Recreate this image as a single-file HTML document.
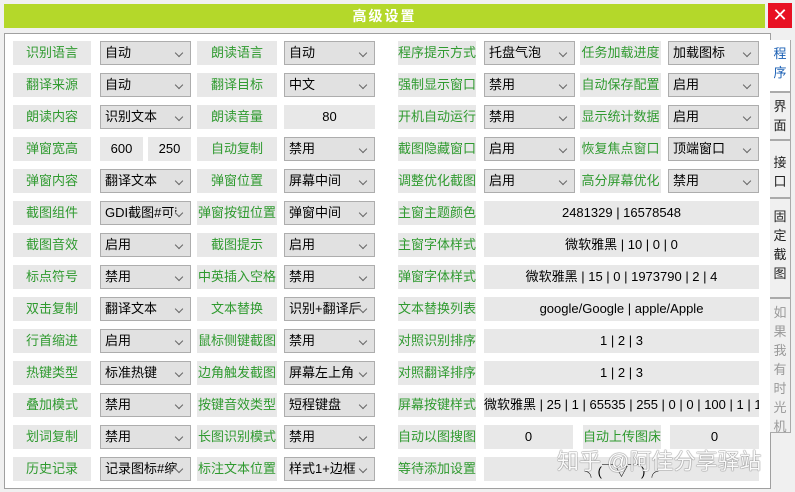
<!DOCTYPE html>
<html><head><meta charset="utf-8"><style>
*{margin:0;padding:0;box-sizing:border-box}
body{width:795px;height:492px;background:#f0f0f0;position:relative;overflow:hidden;font-family:"Liberation Sans","Noto Sans CJK SC",sans-serif;font-size:13px}
.t{position:absolute;left:4px;top:4px;width:761px;height:24px;background:#b4d82a;color:#fff;font-size:14px;font-weight:bold;text-align:center;line-height:24px;letter-spacing:2px}
.x{position:absolute;left:768px;top:3px;width:24px;height:25px;background:#e81123;color:#fff;font-size:18px;text-align:center;line-height:24px}
.p{position:absolute;left:4px;top:33px;width:767px;height:456px;border:1px solid #a0a0a0;background:#fff}
.l,.s,.v{position:absolute;height:24px;line-height:24px;white-space:nowrap;overflow:hidden}
.l{background:#e8e8e8;color:#2f9a2f;text-align:center}
.v{background:#e8e8e8;color:#000;text-align:center}
.s{background:#e1e1e1;border:1px solid #adadad;color:#000;padding-left:4px;line-height:22px}
.s::after{content:"";position:absolute;right:8px;top:8px;width:5px;height:5px;border-right:1px solid #666;border-bottom:1px solid #666;transform:rotate(45deg);background:#e1e1e1;box-shadow:3px 3px 0 3px #e1e1e1}
.tab{position:absolute;left:770px;width:21px;border:1px solid #aaa;border-left:none;background:#f0f0f0;color:#222;text-align:center;font-size:13px;line-height:19px;padding-top:4px}
</style></head><body>
<div class="t">高级设置</div><div class="x">✕</div>
<div class="p"></div>
<div class="tab" style="top:40px;height:52px;background:#fff;color:#1a5fb4;border-top:none">程<br>序</div>
<div class="tab" style="top:92px;height:48px">界<br>面</div>
<div class="tab" style="top:140px;height:58px;padding-top:12px">接<br>口</div>
<div class="tab" style="top:198px;height:100px;padding-top:8px">固<br>定<br>截<br>图</div>
<div class="tab" style="top:298px;height:135px;color:#999">如<br>果<br>我<br>有<br>时<br>光<br>机</div>

<!-- row 1 -->
<div class="l" style="left:13px;top:41px;width:78px">识别语言</div><div class="s" style="left:100px;top:41px;width:91px">自动</div>
<div class="l" style="left:197px;top:41px;width:80px">朗读语言</div><div class="s" style="left:284px;top:41px;width:91px">自动</div>
<div class="l" style="left:398px;top:41px;width:78px">程序提示方式</div><div class="s" style="left:484px;top:41px;width:91px">托盘气泡</div>
<div class="l" style="left:580px;top:41px;width:81px">任务加载进度</div><div class="s" style="left:668px;top:41px;width:91px">加载图标</div>
<!-- row 2 -->
<div class="l" style="left:13px;top:73px;width:78px">翻译来源</div><div class="s" style="left:100px;top:73px;width:91px">自动</div>
<div class="l" style="left:197px;top:73px;width:80px">翻译目标</div><div class="s" style="left:284px;top:73px;width:91px">中文</div>
<div class="l" style="left:398px;top:73px;width:78px">强制显示窗口</div><div class="s" style="left:484px;top:73px;width:91px">禁用</div>
<div class="l" style="left:580px;top:73px;width:81px">自动保存配置</div><div class="s" style="left:668px;top:73px;width:91px">启用</div>
<!-- row 3 -->
<div class="l" style="left:13px;top:105px;width:78px">朗读内容</div><div class="s" style="left:100px;top:105px;width:91px">识别文本</div>
<div class="l" style="left:197px;top:105px;width:80px">朗读音量</div><div class="v" style="left:284px;top:105px;width:91px">80</div>
<div class="l" style="left:398px;top:105px;width:78px">开机自动运行</div><div class="s" style="left:484px;top:105px;width:91px">禁用</div>
<div class="l" style="left:580px;top:105px;width:81px">显示统计数据</div><div class="s" style="left:668px;top:105px;width:91px">启用</div>
<!-- row 4 -->
<div class="l" style="left:13px;top:137px;width:78px">弹窗宽高</div><div class="v" style="left:100px;top:137px;width:43px">600</div><div class="v" style="left:148px;top:137px;width:43px">250</div>
<div class="l" style="left:197px;top:137px;width:80px">自动复制</div><div class="s" style="left:284px;top:137px;width:91px">禁用</div>
<div class="l" style="left:398px;top:137px;width:78px">截图隐藏窗口</div><div class="s" style="left:484px;top:137px;width:91px">启用</div>
<div class="l" style="left:580px;top:137px;width:81px">恢复焦点窗口</div><div class="s" style="left:668px;top:137px;width:91px">顶端窗口</div>
<!-- row 5 -->
<div class="l" style="left:13px;top:169px;width:78px">弹窗内容</div><div class="s" style="left:100px;top:169px;width:91px">翻译文本</div>
<div class="l" style="left:197px;top:169px;width:80px">弹窗位置</div><div class="s" style="left:284px;top:169px;width:91px">屏幕中间</div>
<div class="l" style="left:398px;top:169px;width:78px">调整优化截图</div><div class="s" style="left:484px;top:169px;width:91px">启用</div>
<div class="l" style="left:580px;top:169px;width:81px">高分屏幕优化</div><div class="s" style="left:668px;top:169px;width:91px">禁用</div>
<!-- row 6 -->
<div class="l" style="left:13px;top:201px;width:78px">截图组件</div><div class="s" style="left:100px;top:201px;width:91px">GDI截图#可i</div>
<div class="l" style="left:197px;top:201px;width:80px">弹窗按钮位置</div><div class="s" style="left:284px;top:201px;width:91px">弹窗中间</div>
<div class="l" style="left:398px;top:201px;width:78px">主窗主题颜色</div><div class="v" style="left:484px;top:201px;width:275px">2481329 | 16578548</div>
<!-- row 7 -->
<div class="l" style="left:13px;top:233px;width:78px">截图音效</div><div class="s" style="left:100px;top:233px;width:91px">启用</div>
<div class="l" style="left:197px;top:233px;width:80px">截图提示</div><div class="s" style="left:284px;top:233px;width:91px">启用</div>
<div class="l" style="left:398px;top:233px;width:78px">主窗字体样式</div><div class="v" style="left:484px;top:233px;width:275px">微软雅黑 | 10 | 0 | 0</div>
<!-- row 8 -->
<div class="l" style="left:13px;top:265px;width:78px">标点符号</div><div class="s" style="left:100px;top:265px;width:91px">禁用</div>
<div class="l" style="left:197px;top:265px;width:80px">中英插入空格</div><div class="s" style="left:284px;top:265px;width:91px">禁用</div>
<div class="l" style="left:398px;top:265px;width:78px">弹窗字体样式</div><div class="v" style="left:484px;top:265px;width:275px">微软雅黑 | 15 | 0 | 1973790 | 2 | 4</div>
<!-- row 9 -->
<div class="l" style="left:13px;top:297px;width:78px">双击复制</div><div class="s" style="left:100px;top:297px;width:91px">翻译文本</div>
<div class="l" style="left:197px;top:297px;width:80px">文本替换</div><div class="s" style="left:284px;top:297px;width:91px">识别+翻译后</div>
<div class="l" style="left:398px;top:297px;width:78px">文本替换列表</div><div class="v" style="left:484px;top:297px;width:275px">google/Google | apple/Apple</div>
<!-- row 10 -->
<div class="l" style="left:13px;top:329px;width:78px">行首缩进</div><div class="s" style="left:100px;top:329px;width:91px">启用</div>
<div class="l" style="left:197px;top:329px;width:80px">鼠标侧键截图</div><div class="s" style="left:284px;top:329px;width:91px">禁用</div>
<div class="l" style="left:398px;top:329px;width:78px">对照识别排序</div><div class="v" style="left:484px;top:329px;width:275px">1 | 2 | 3</div>
<!-- row 11 -->
<div class="l" style="left:13px;top:361px;width:78px">热键类型</div><div class="s" style="left:100px;top:361px;width:91px">标准热键</div>
<div class="l" style="left:197px;top:361px;width:80px">边角触发截图</div><div class="s" style="left:284px;top:361px;width:91px">屏幕左上角</div>
<div class="l" style="left:398px;top:361px;width:78px">对照翻译排序</div><div class="v" style="left:484px;top:361px;width:275px">1 | 2 | 3</div>
<!-- row 12 -->
<div class="l" style="left:13px;top:393px;width:78px">叠加模式</div><div class="s" style="left:100px;top:393px;width:91px">禁用</div>
<div class="l" style="left:197px;top:393px;width:80px">按键音效类型</div><div class="s" style="left:284px;top:393px;width:91px">短程键盘</div>
<div class="l" style="left:398px;top:393px;width:78px">屏幕按键样式</div><div class="v" style="left:484px;top:393px;width:275px">微软雅黑 | 25 | 1 | 65535 | 255 | 0 | 0 | 100 | 1 | 1</div>
<!-- row 13 -->
<div class="l" style="left:13px;top:425px;width:78px">划词复制</div><div class="s" style="left:100px;top:425px;width:91px">禁用</div>
<div class="l" style="left:197px;top:425px;width:80px">长图识别模式</div><div class="s" style="left:284px;top:425px;width:91px">禁用</div>
<div class="l" style="left:398px;top:425px;width:78px">自动以图搜图</div><div class="v" style="left:484px;top:425px;width:89px">0</div>
<div class="l" style="left:583px;top:425px;width:78px">自动上传图床</div><div class="v" style="left:670px;top:425px;width:89px">0</div>
<!-- row 14 -->
<div class="l" style="left:13px;top:457px;width:78px">历史记录</div><div class="s" style="left:100px;top:457px;width:91px">记录图标#缩</div>
<div class="l" style="left:197px;top:457px;width:80px">标注文本位置</div><div class="s" style="left:284px;top:457px;width:91px">样式1+边框</div>
<div class="l" style="left:398px;top:457px;width:78px">等待添加设置</div><div class="v" style="left:484px;top:457px;width:275px;line-height:30px">╮(￣▽￣)╭</div>
<div style="position:absolute;left:557px;top:444px;font-size:22px;color:#fafafa;text-shadow:0 0 1px #666,0 0 1px #666;white-space:nowrap">知乎 @阿佳分享驿站</div>
</body></html>
